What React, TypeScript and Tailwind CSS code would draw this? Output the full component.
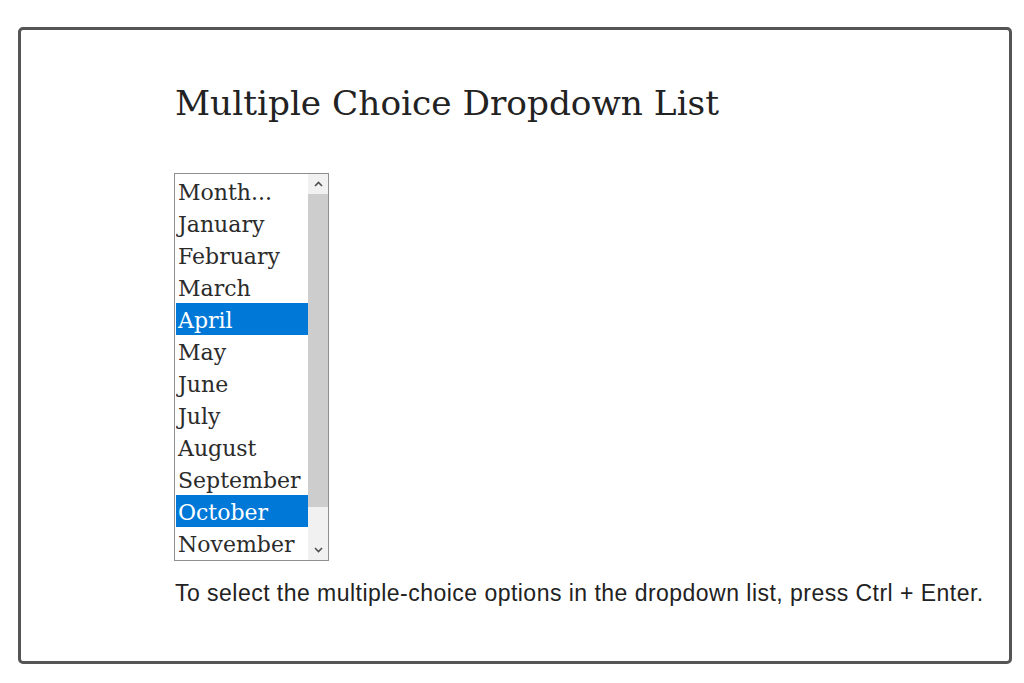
import { useState } from "react";

const months = [
  "Month...",
  "January",
  "February",
  "March",
  "April",
  "May",
  "June",
  "July",
  "August",
  "September",
  "October",
  "November",
];

const App = () => {
  const [selected, setSelected] = useState<string[]>(["April", "October"]);

  const toggle = (m: string) => {
    setSelected((prev) => (prev.includes(m) ? prev.filter((x) => x !== m) : [...prev, m]));
  };

  return (
    <div className="w-[1024px] h-[683px] bg-white pt-[27px] pl-[18px]">
      <div className="w-[994px] h-[637px] border-[3px] border-[#555555] rounded-[5px] pl-[153px] pt-[51px]">
        <h2
          className="text-[34.3px] leading-[44px] text-[#222222] pl-px"
          style={{ fontFamily: '"DejaVu Serif", serif' }}
        >
          Multiple Choice Dropdown List
        </h2>

        <div className="mt-[48px] w-[155px] h-[388px] border border-[#8f8f8f] flex bg-white">
          <div className="flex-1 pl-px pt-px" style={{ fontFamily: '"DejaVu Serif", serif' }}>
            {months.map((m) => {
              const on = selected.includes(m);
              return (
                <div
                  key={m}
                  onClick={() => toggle(m)}
                  className={
                    "h-[32px] leading-[35px] overflow-hidden pl-[2px] text-[22px] whitespace-nowrap cursor-default " +
                    (on ? "bg-[#0078d7] text-white" : "text-[#2b2b2b]")
                  }
                >
                  {m}
                </div>
              );
            })}
          </div>
          <div className="w-[20px] flex flex-col bg-[#f1f1f1]">
            <div className="h-[20px] flex items-center justify-center">
              <svg width="9" height="6" viewBox="0 0 9 6">
                <path d="M1 5 L4.5 1.5 L8 5" fill="none" stroke="#505050" strokeWidth="1.6" />
              </svg>
            </div>
            <div className="h-[313px] bg-[#cdcdcd]" />
            <div className="flex-1" />
            <div className="h-[20px] flex items-center justify-center">
              <svg width="9" height="6" viewBox="0 0 9 6">
                <path d="M1 1 L4.5 4.5 L8 1" fill="none" stroke="#505050" strokeWidth="1.6" />
              </svg>
            </div>
          </div>
        </div>

        <p
          className="mt-[17px] pl-px text-[23px] leading-[30px] tracking-[0.47px] text-[#222222]"
          style={{ fontFamily: '"Liberation Sans", Arial, sans-serif' }}
        >
          To select the multiple-choice options in the dropdown list, press Ctrl + Enter.
        </p>
      </div>
    </div>
  );
};

export default App;
